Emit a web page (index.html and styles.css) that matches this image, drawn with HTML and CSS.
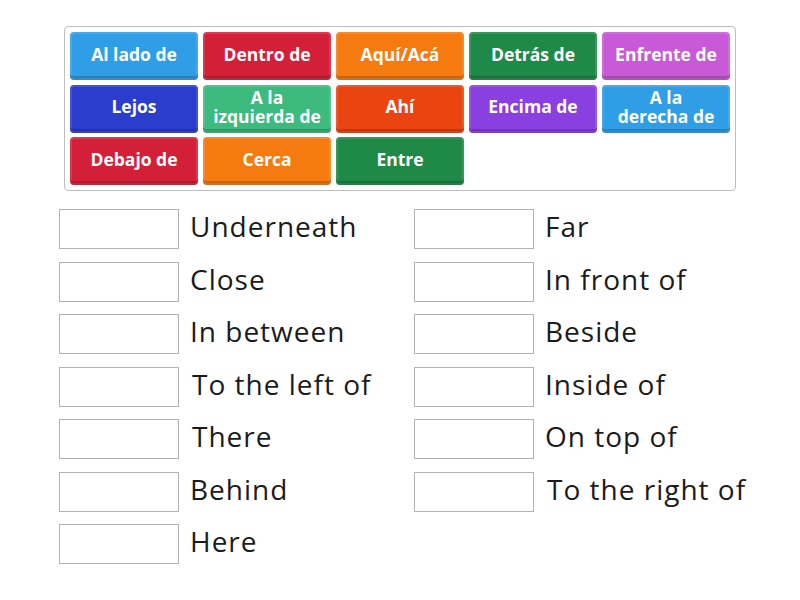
FILE: index.html
```html
<!DOCTYPE html>
<html>
<head>
<meta charset="utf-8">
<link rel="stylesheet" href="styles.css">
</head>
<body>
<div class="bank">
  <div class="tile c-blue">Al lado de</div>
  <div class="tile c-red">Dentro de</div>
  <div class="tile c-orange">Aquí/Acá</div>
  <div class="tile c-green">Detrás de</div>
  <div class="tile c-pink">Enfrente de</div>
  <div class="tile c-navy">Lejos</div>
  <div class="tile c-teal">A la<br>izquierda de</div>
  <div class="tile c-redorange">Ahí</div>
  <div class="tile c-violet">Encima de</div>
  <div class="tile c-blue">A la<br>derecha de</div>
  <div class="tile c-red">Debajo de</div>
  <div class="tile c-orange">Cerca</div>
  <div class="tile c-green">Entre</div>
</div>
<div class="answers">
  <div class="col">
    <div class="item"><div class="slot"></div><span class="label">Underneath</span></div>
    <div class="item"><div class="slot"></div><span class="label">Close</span></div>
    <div class="item"><div class="slot"></div><span class="label">In between</span></div>
    <div class="item"><div class="slot"></div><span class="label shift">To the left of</span></div>
    <div class="item"><div class="slot"></div><span class="label shift">There</span></div>
    <div class="item"><div class="slot"></div><span class="label">Behind</span></div>
    <div class="item"><div class="slot"></div><span class="label">Here</span></div>
  </div>
  <div class="col">
    <div class="item"><div class="slot"></div><span class="label">Far</span></div>
    <div class="item"><div class="slot"></div><span class="label">In front of</span></div>
    <div class="item"><div class="slot"></div><span class="label">Beside</span></div>
    <div class="item"><div class="slot"></div><span class="label">Inside of</span></div>
    <div class="item"><div class="slot"></div><span class="label">On top of</span></div>
    <div class="item"><div class="slot"></div><span class="label shift">To the right of</span></div>
  </div>
</div>
</body>
</html>
```

FILE: styles.css
```css
html, body {
  margin: 0;
  padding: 0;
  background: #ffffff;
  font-family: "Open Sans", "Noto Sans", "DejaVu Sans", sans-serif;
}

.bank {
  margin: 26px 0 0 64px;
  width: 660px;
  padding: 5px;
  border: 1px solid #bdbdbd;
  border-radius: 4px;
  display: grid;
  grid-template-columns: repeat(5, 128px);
  grid-auto-rows: 48px;
  column-gap: 5px;
  row-gap: 4.5px;
}

.tile {
  border-radius: 4px;
  color: #ffffff;
  font-weight: 700;
  font-size: 17.5px;
  line-height: 19px;
  text-align: center;
  display: flex;
  align-items: center;
  justify-content: center;
  padding: 0 2px 4px;
  box-sizing: border-box;
  box-shadow: inset 0 -4px 0 rgba(0, 0, 0, 0.18), inset 0 0 0 2px rgba(255, 255, 255, 0.12);
}

.c-blue { background: #2f9ee6; }
.c-red { background: #d41f38; }
.c-orange { background: #f57b10; }
.c-green { background: #1f8947; }
.c-pink { background: #c85ad7; }
.c-navy { background: #2a3dcc; }
.c-teal { background: #3dba7d; }
.c-redorange { background: #ea4510; }
.c-violet { background: #8a3fe0; }

.answers {
  margin: 18px 0 0 59px;
  display: flex;
}

.col {
  width: 355px;
  display: flex;
  flex-direction: column;
  gap: 12.5px;
}

.item {
  display: flex;
  align-items: center;
  height: 40px;
  gap: 11px;
}

.slot {
  width: 120px;
  height: 40px;
  box-sizing: border-box;
  border: 1px solid #b3b3b3;
  background: #ffffff;
  flex: none;
}

.label {
  font-size: 28px;
  letter-spacing: 1px;
  color: #1b1b1b;
  margin-top: -6px;
  white-space: nowrap;
}

.shift {
  margin-left: 2px;
}
```
